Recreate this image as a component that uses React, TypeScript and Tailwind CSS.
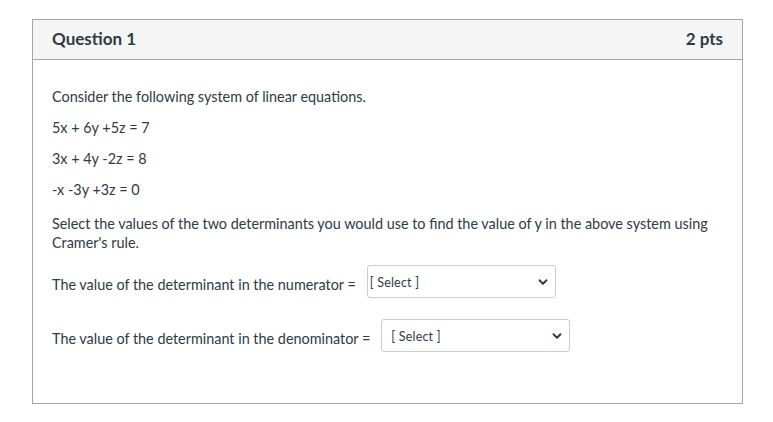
import { ChevronDown } from 'lucide-react';

// 下拉框，样式仿 Canvas 测验。
function SelectBox({ padLeft }: { padLeft: string }) {
  return (
    <div
      className={`flex h-[33px] w-[189px] items-center justify-between rounded-[3px] border border-[#c7cdd1] bg-white pr-[5px] ${padLeft}`}
    >
      <span className="mt-[3px] text-[12.5px] tracking-[0.2px] text-[#2d3b45]">[ Select ]</span>
      <ChevronDown className="h-[14px] w-[14px] text-[#2d3b45]" strokeWidth={3.2} />
    </div>
  );
}

export default function App() {
  return (
    <div className="min-h-[422px] bg-white pt-[19px] pl-[32px] font-['Lato','Liberation_Sans',sans-serif] text-[#2d3b45]">
      <div className="w-[711px] h-[385px] border border-[#a5a5a5]">
        {/* 标题栏 */}
        <div className="flex h-[40px] items-center justify-between border-b border-[#a5a5a5] bg-[#f5f5f5] px-[19px] pb-[1px]">
          <h2 className="m-0 text-[17px] font-bold">Question 1</h2>
          <span className="text-[17px] font-bold">2 pts</span>
        </div>

        {/* 题目内容 */}
        <div className="pl-[19px] pt-[27px] text-[14.4px]">
          <p className="m-0 mb-[11px] leading-[20px]">Consider the following system of linear equations.</p>
          <p className="m-0 mb-[11px] leading-[20px]">5x + 6y +5z = 7</p>
          <p className="m-0 mb-[11px] leading-[20px]">3x + 4y -2z = 8</p>
          <p className="m-0 mb-[11px] leading-[20px]">-x -3y +3z = 0</p>
          <p className="m-0 mt-[14px] leading-[19px]">
            Select the values of the two determinants you would use to find the value of y in the above system using
            <br />
            Cramer's rule.
          </p>

          <div className="mt-[13px] flex items-center">
            <span className="mr-[11px] pt-[6px]">The value of the determinant in the numerator =</span>
            <SelectBox padLeft="pl-[2px]" />
          </div>

          <div className="mt-[21px] flex items-center">
            <span className="mr-[11px] pt-[6px]">The value of the determinant in the denominator =</span>
            <SelectBox padLeft="pl-[9px]" />
          </div>
        </div>
      </div>
    </div>
  );
}
